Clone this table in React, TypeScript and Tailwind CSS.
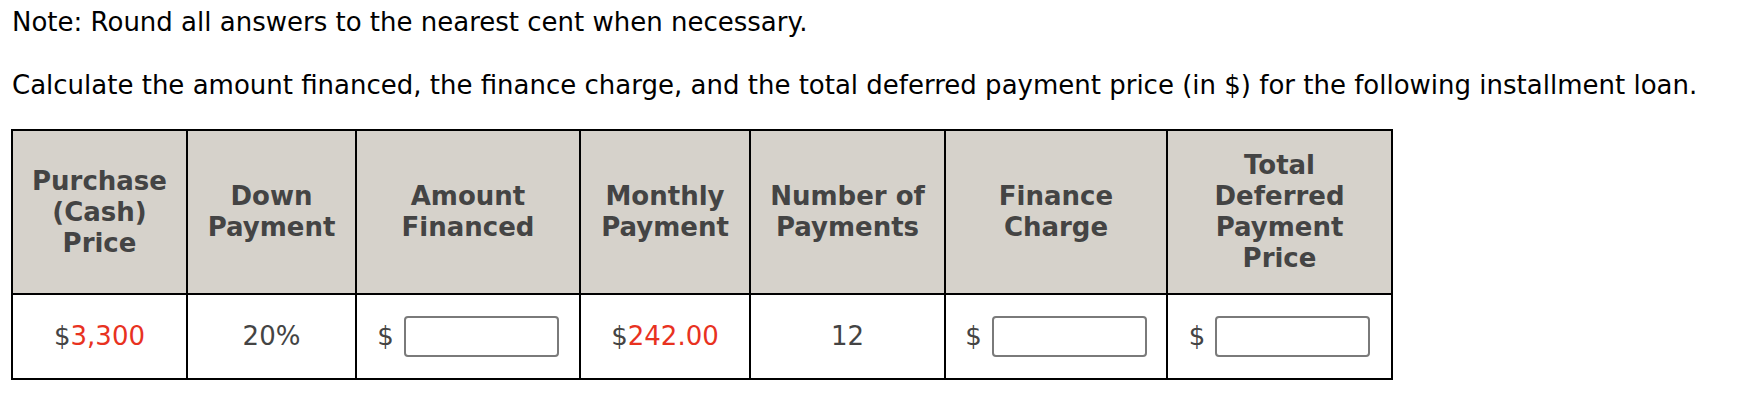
import React from 'react';

const font = { fontFamily: '"DejaVu Sans", Verdana, sans-serif' };

const headers = [
  ['Purchase', '(Cash)', 'Price'],
  ['Down', 'Payment'],
  ['Amount', 'Financed'],
  ['Monthly', 'Payment'],
  ['Number of', 'Payments'],
  ['Finance', 'Charge'],
  ['Total', 'Deferred', 'Payment', 'Price'],
];

const widths = ['w-[175px]', 'w-[169px]', 'w-[224px]', 'w-[170px]', 'w-[195px]', 'w-[222px]', 'w-[225px]'];

const Money = ({ value }: { value: string }) => (
  <span>
    <span className="text-[#444]">$</span>
    <span className="text-[#e8321f]">{value}</span>
  </span>
);

const AnswerBox = () => (
  <div className="flex items-center justify-center gap-[10px]">
    <span className="text-[#444]">$</span>
    <input
      type="text"
      className="w-[155px] h-[41px] rounded-[4px] border-2 border-[#7a7a7a] bg-white outline-none"
    />
  </div>
);

export default function App() {
  return (
    <div className="bg-white min-h-screen pl-3 pt-[8px] text-black text-[26px]" style={font}>
      <p className="leading-[28px]">Note: Round all answers to the nearest cent when necessary.</p>
      <p className="leading-[28px] mt-[35px]">
        Calculate the amount financed, the finance charge, and the total deferred payment price (in $) for the following installment loan.
      </p>
      <table className="mt-[30px] ml-[-1px] border-collapse border-2 border-black">
        <thead>
          <tr className="h-[164px] bg-[#d6d2cb]">
            {headers.map((lines, i) => (
              <th
                key={i}
                className={`${widths[i]} border-2 border-black align-middle text-center font-bold leading-[31px] text-[#444]`}
              >
                {lines.map((l) => (
                  <div key={l}>{l}</div>
                ))}
              </th>
            ))}
          </tr>
        </thead>
        <tbody>
          <tr className="h-[85px] text-center text-[#444]">
            <td className="border-2 border-black"><Money value="3,300" /></td>
            <td className="border-2 border-black">20%</td>
            <td className="border-2 border-black"><AnswerBox /></td>
            <td className="border-2 border-black"><Money value="242.00" /></td>
            <td className="border-2 border-black">12</td>
            <td className="border-2 border-black"><AnswerBox /></td>
            <td className="border-2 border-black"><AnswerBox /></td>
          </tr>
        </tbody>
      </table>
    </div>
  );
}
